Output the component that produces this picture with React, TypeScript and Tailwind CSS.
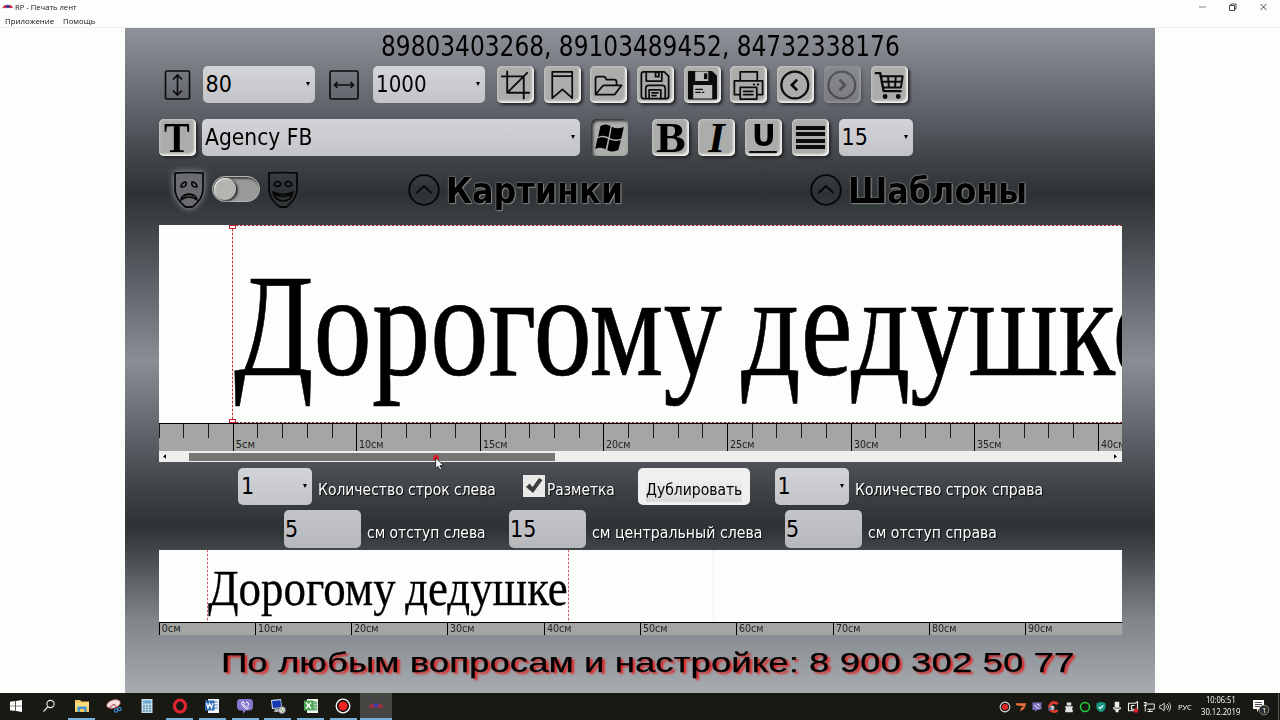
import { useLayoutEffect, useRef, useState } from "react";
import type { ReactNode } from "react";
import clsx from "clsx";

interface FitTextProps {
  width: number;
  className?: string;
  children: ReactNode;
}

// Stretches a single line of text horizontally to the given width
const FitText = ({ width, className, children }: FitTextProps) => {
  const ref = useRef<HTMLSpanElement>(null);
  const [scale, setScale] = useState(1);

  useLayoutEffect(() => {
    if (ref.current) setScale(width / ref.current.offsetWidth);
  }, [width]);

  return (
    <span className={clsx("block shrink-0", className)} style={{ width }}>
      <span
        ref={ref}
        className="inline-block origin-left whitespace-nowrap"
        style={{ transform: `scaleX(${scale})` }}
      >
        {children}
      </span>
    </span>
  );
};

interface BoxProps {
  className?: string;
  children?: ReactNode;
}

const ToolButton = ({ className, children }: BoxProps) => (
  <button
    className={clsx(
      "flex h-[37px] w-[37px] shrink-0 items-center justify-center rounded-[5px] bg-[#abadaa] shadow-[inset_-2px_-2px_2px_#eeeeeb,inset_1px_1px_2px_#c4c4c2,2px_2px_3px_#25262a]",
      className
    )}
  >
    {children}
  </button>
);

const Icon = ({ children, width = 1.8 }: { children: ReactNode; width?: number }) => (
  <svg
    viewBox="0 0 37 37"
    className="mr-[1px] h-[36px] w-[36px] shrink-0"
    fill="none"
    stroke="#0b0b0b"
    strokeWidth={width}
    strokeLinejoin="round"
    strokeLinecap="round"
  >
    {children}
  </svg>
);

interface SelectProps {
  value: string;
  textWidth: number;
  className?: string;
}

const Select = ({ value, textWidth, className }: SelectProps) => (
  <div
    className={clsx(
      "flex h-[37px] shrink-0 items-center justify-between rounded-[5px] bg-linear-to-b from-[#d3d4d8] to-[#c3c4c8] pr-[5px] pl-[3px]",
      className
    )}
  >
    <FitText width={textWidth} className="text-[23px] leading-[37px]">
      {value}
    </FitText>
    <svg viewBox="0 0 4 4" className="mb-[2px] h-[4px] w-[4px]">
      <path d="M0 0h4L2 4z" />
    </svg>
  </div>
);

const Field = ({ value, textWidth, className }: SelectProps) => (
  <div
    className={clsx(
      "flex h-[38px] shrink-0 items-center rounded-[5px] bg-linear-to-b from-[#c4c5c9] to-[#b7b8bc] pl-[1px]",
      className
    )}
  >
    <FitText width={textWidth} className="text-[23px] leading-[38px]">
      {value}
    </FitText>
  </div>
);

const Label = ({ width, className, children }: FitTextProps) => (
  <FitText
    width={width}
    className={clsx("text-[16px] leading-[20px] text-white [text-shadow:1px_1px_1px_#000]", className)}
  >
    {children}
  </FitText>
);

const Mask = ({ sad }: { sad?: boolean }) => (
  <svg
    viewBox="0 0 30 36"
    className={clsx(
      "h-[36px] w-[30px] shrink-0 overflow-visible",
      sad && "drop-shadow-[0_0_3px_#a8a9ac]"
    )}
    fill={sad ? "#6a6c70" : "none"}
    stroke="#050505"
    strokeWidth="1.7"
    strokeLinejoin="round"
  >
    <path d="M1 1.2Q15 -.2 29 1.2V16c0 10-6 15-10 18.6q-4 1-8 0C7 31 1 26 1 16z" />
    {sad ? (
      <>
        <path d="M7 14c1-3 3-4 5-4 1 3-1 5-3 5-1 0-2 0-2-1zM23 14c-1-3-3-4-5-4-1 3 1 5 3 5 1 0 2 0 2-1z" fill="none" />
        <path d="M7 28c1-8 15-8 16 0-4-4-12-4-16 0z" fill="none" />
        <path d="M10 24q5-3 10 0" fill="none" />
      </>
    ) : (
      <>
        <path d="M6 13c1-4 5-5 7-1-1 3-5 3-7 1zM24 13c-1-4-5-5-7-1 1 3 5 3 7 1z" />
        <path d="M5 20q10 5 20 0-2 9-10 9T5 20zM7 22.500q8 4 16 0" />
      </>
    )}
  </svg>
);

const SectionTitle = ({ width, className, children }: FitTextProps) => (
  <div className={clsx("flex h-[37px] items-center gap-[6px]", className)}>
    <svg viewBox="0 0 32 32" className="h-[32px] w-[32px]" fill="none" stroke="#060606" strokeWidth="1.8">
      <circle cx="16" cy="16" r="14.8" />
      <path d="M8.5 19 16 12l7.5 7" />
    </svg>
    <FitText
      width={width}
      className="pt-[2px] text-[35px] leading-[37px] font-bold [text-shadow:0_0_1px_#aaa,0_0_2px_#999,1px_1px_1px_#777]"
    >
      {children}
    </FitText>
  </div>
);

const cm = Array.from({ length: 39 }, (_, i) => i + 2);
const previewCm = [0, 10, 20, 30, 40, 50, 60, 70, 80, 90];

const MainRuler = () => (
  <div className="flex h-[28px] overflow-hidden border-t border-black bg-[#a4a6a3]">
    {cm.map((n) => (
      <div
        key={n}
        className={clsx("w-[24.72px] shrink-0", n % 5 === 0 ? "h-full border-l-[1.5px] border-black" : "h-[14px] border-l-[1.5px] border-[#1c1c1c]")}
      >
        {n % 5 === 0 && (
          <FitText width={n === 5 ? 19 : 25} className="pt-[14px] pl-[2px] text-[11px] leading-[14px] text-[#222]">
            {n}см
          </FitText>
        )}
      </div>
    ))}
  </div>
);

const Toolbar = () => (
  <>
    <div className="mt-[1px] flex h-[37px] items-center">
      <svg viewBox="0 0 26 30" className="ml-[5px] h-[30px] w-[27px]" fill="none" stroke="#0b0b0b" strokeWidth="1.6">
        <rect x="1" y="1" width="24" height="28" rx="1.5" />
        <path d="M13 5v20M8.5 9.500 13 5l4.500 4.500M8.500 20.500 13 25l4.500-4.500" />
      </svg>
      <Select value="80" textWidth={26} className="ml-[12px] w-[112px]" />
      <svg viewBox="0 0 30 30" className="ml-[14px] h-[30px] w-[30px]" fill="none" stroke="#0b0b0b" strokeWidth="1.6">
        <rect x="1" y="1" width="28" height="28" rx="1.5" />
        <path d="M5.500 15h19M8.500 12l-3 3 3 3M21.500 12l3 3-3 3" />
      </svg>
      <Select value="1000" textWidth={51} className="ml-[14.500px] w-[112px]" />
      <div className="ml-[12px] flex gap-[9.7px]">
        <ToolButton>
          <Icon width={1.9}>
            <path d="M5 9.700h22.500V32.500M10.500 4.500v22H33M10.500 26.500 31 6" />
          </Icon>
        </ToolButton>
        <ToolButton>
          <Icon>
            <path d="M8.500 5h20.500v27l-10-9-10.500 9zM8.500 9.500H29" />
          </Icon>
        </ToolButton>
        <ToolButton>
          <Icon>
            <path d="M5.700 28V12q0-2 2-2H14q2 0 2.700 3H25q2.300 0 2.300 2.500V19M5.700 28.300 13 19.500q.6-.7 1.500-.7h18L26 27.600q-.6.7-1.500.7z" />
          </Icon>
        </ToolButton>
        <ToolButton>
          <Icon>
            <path d="M7 5h21l4.500 4.500V30q0 2.500-2.500 2.500H7Q4.500 32.500 4.500 30V7.500Q4.500 5 7 5z" />
            <path d="M9.500 5v9.500h16V5M19 5.500h3.500v4.500H19zM9 32.500V22q0-3 3-3h14q3 0 3 3v10.500M12.500 32.500V23.500h12v9M15.500 26.500h6M15.500 29.300h4" />
          </Icon>
        </ToolButton>
        <ToolButton>
          <Icon>
            <path d="M5 5h23.500l4.500 4.500V32.500H5z" fill="#0b0b0b" />
            <path d="M11.500 4.500h13.500v10H11.500zM9.500 18.500H29V32.500H9.500z" fill="#bcbdbb" stroke="none" />
            <path d="M20.500 6.500h3.500v6h-3.500z" fill="#0b0b0b" stroke="none" />
            <path d="M12 23h7M12 26h5M19 26h1.500" strokeWidth="1.2" />
          </Icon>
        </ToolButton>
        <ToolButton>
          <Icon>
            <path d="M10.500 14V5h17.500v9M10.500 28.500H4.500V14.200h29v14.300h-6M10.500 21h17v12h-17zM14 25h9.500M14 28.500h9.500" />
            <path d="M24.500 18h.3M28.500 18h.5" strokeWidth="2" />
          </Icon>
        </ToolButton>
        <ToolButton>
          <Icon width={2.3}>
            <circle cx="18.300" cy="18.500" r="13.800" />
            <path d="m20.700 13-5.400 5.500 5.400 5.500" strokeWidth="2.800" strokeLinecap="butt" strokeLinejoin="miter" />
          </Icon>
        </ToolButton>
        <ToolButton className="opacity-30">
          <Icon width={2.3}>
            <circle cx="18.300" cy="18.500" r="13.800" />
            <path d="m16 13 5.400 5.500L16 24" strokeWidth="2.800" strokeLinecap="butt" strokeLinejoin="miter" />
          </Icon>
        </ToolButton>
        <ToolButton>
          <Icon width={2}>
            <path d="M5 6.300h4.500l3.500 18.500h17.500" strokeWidth="2.500" />
            <path d="M10 9.500h22.500l-1.700 11.500H12.500M11 15.200h20.500M17.500 9.500l.8 11M25.500 9.500l-.8 11" />
            <circle cx="14.500" cy="30.300" r="1.500" fill="#0b0b0b" />
            <circle cx="28" cy="30.300" r="1.500" fill="#0b0b0b" />
          </Icon>
        </ToolButton>
      </div>
    </div>

    <div className="mt-[16px] flex h-[37px] items-center">
      <ToolButton>
        <FitText width={26} className="font-['Liberation_Serif',serif] text-[43px] leading-[37px] font-bold">
          T
        </FitText>
      </ToolButton>
      <Select value="Agency FB" textWidth={107} className="ml-[6.500px] w-[378px]" />
      <ToolButton className="ml-[10.500px] bg-[#979997] shadow-[inset_2px_2px_3px_#2a2b2d,inset_-1px_-1px_1px_#a5a6a5]">
        <svg viewBox="0 0 37 37" className="h-[37px] w-[37px]">
          <path d="M9.500 7q5-3 10 0l-2 11.300q-5-3-10.500-.3zM20.800 7.700q5 3 12 .2l-2.500 11.500q-6 2.500-11.500-.5zM6.500 19.500q5-2.700 10.500.2l-2.300 10.500q-5-3-10.500-.2zM18.400 20.400q5.300 2.700 11.500.5L27.300 31q-5.500 2.800-11 .2z" />
        </svg>
      </ToolButton>
      <div className="ml-[24px] flex gap-[9.700px]">
        <ToolButton>
          <FitText width={30} className="font-['Liberation_Serif',serif] text-[43px] leading-[37px] font-bold">
            B
          </FitText>
        </ToolButton>
        <ToolButton>
          <span className="font-['Liberation_Serif',serif] text-[43px] leading-[37px] font-bold italic">I</span>
        </ToolButton>
        <ToolButton className="flex-col">
          <FitText width={24} className="mr-[1px] h-[29px] text-[31px] leading-[27px] font-bold">
            U
          </FitText>
          <span className="h-[2px] w-[28px] rounded-full bg-[#0b0b0b]" />
        </ToolButton>
        <ToolButton className="flex-col gap-[2.500px]">
          <span className="h-[3.800px] w-[29px] bg-[#0b0b0b]" />
          <span className="h-[3.800px] w-[29px] bg-[#0b0b0b]" />
          <span className="h-[3.800px] w-[29px] bg-[#0b0b0b]" />
          <span className="h-[3.800px] w-[29px] bg-[#0b0b0b]" />
        </ToolButton>
      </div>
      <Select value="15" textWidth={26} className="ml-[10px] w-[74px]" />
    </div>

    <div className="mt-[15px] flex h-[37px] items-center">
      <div className="ml-[15.500px] flex items-center gap-[8px]">
        <Mask sad />
        <div className="mb-[1px] flex h-[26px] w-[48px] items-center rounded-full border border-[#b4b5b2] bg-[#999b98] pl-[1px] shadow-[inset_1px_2px_2px_#444]">
          <div className="h-[22px] w-[22px] rounded-full bg-[#b3b5b1] shadow-[inset_1px_1px_1px_#e6e6e3,2px_1px_2px_#333]" />
        </div>
        <Mask />
      </div>
      <SectionTitle width={177} className="mt-[1px] ml-[109.500px]">
        Картинки
      </SectionTitle>
      <SectionTitle width={179} className="mt-[1px] ml-[187.500px]">
        Шаблоны
      </SectionTitle>
    </div>
  </>
);

const Editor = () => (
  <div className="mt-[17px] w-[963px]">
    <div className="relative h-[198px] overflow-hidden bg-[#fcfefc] pl-[75px]">
      <FitText
        width={930}
        className="font-['Liberation_Serif',serif] text-[146px] leading-[202px] [word-spacing:-12px] [-webkit-text-stroke:0.7px_#000]"
      >
        Дорогому дедушке
      </FitText>
      {/* dotted selection frame with its corner handles */}
      <span className="absolute top-0 left-[73px] h-full w-[1px] bg-[repeating-linear-gradient(to_bottom,#c8232c_0_2px,#f3c9cb_2px_4px)]" />
      <span className="absolute top-0 right-0 left-[73px] h-[1px] bg-[repeating-linear-gradient(to_right,#b8232c_0_2px,#e9c9cb_2px_4px)]" />
      <span className="absolute right-0 bottom-0 left-[73px] h-[1px] bg-[repeating-linear-gradient(to_right,#8a1c22_0_2px,#e9c9cb_2px_4px)]" />
      <span className="absolute top-0 left-[70px] h-[4px] w-[7px] border border-[#c8232c] bg-white" />
      <span className="absolute bottom-0 left-[70px] h-[4px] w-[7px] border border-[#c8232c] bg-white" />
    </div>
    <MainRuler />
    <div className="relative flex h-[11px] items-center bg-[#eeefed]">
      <svg viewBox="0 0 4 6" className="ml-[4px] h-[5px] w-[3px]">
        <path d="M4 0v6L0 3z" />
      </svg>
      <div className="ml-[23.500px] h-[8px] w-[366px] bg-[#747673]" />
      <svg viewBox="0 0 4 6" className="mr-[5px] ml-auto h-[5px] w-[3px]">
        <path d="M0 0v6l4-3z" />
      </svg>
      {/* mouse pointer over the scroll thumb */}
      <span className="absolute top-[4px] left-[274px] h-[6px] w-[6px] rounded-full bg-[#d81e26]" />
      <svg viewBox="0 0 12 18" className="absolute top-[6px] left-[276px] z-10 h-[14px] w-[9px]">
        <path d="M1 1v14l3-3 2.500 5 2.500-1-2.500-5H11z" fill="#fff" stroke="#111" />
      </svg>
    </div>
  </div>
);

const Settings = () => (
  <>
    <div className="mt-[6px] flex h-[37px] items-center">
      <Select value="1" textWidth={13} className="ml-[79.500px] w-[74px]" />
      <Label width={178} className="mt-[6px] ml-[6px]">Количество строк слева</Label>
      <div className="mb-[1px] ml-[27px] flex h-[22px] w-[22px] items-center justify-center bg-[#e9eae8]">
        <svg viewBox="0 0 20 20" className="h-[20px] w-[20px]">
          <path d="m2 11 3.500-3.500 3 3.500L15 2l3.500 2L9 17z" fill="#3c3e3d" />
        </svg>
      </div>
      <Label width={68} className="mt-[6px] ml-[2px]">Разметка</Label>
      <button className="ml-[23px] flex h-[37px] w-[112px] items-center justify-center rounded-[5px] bg-[#eff0ef] pt-[6px]">
        <FitText width={96} className="bg-linear-to-b from-[#eff0ef] to-[#d9dad9] text-left text-[16px] leading-[24px]">
          Дублировать
        </FitText>
      </button>
      <Select value="1" textWidth={13} className="ml-[24.500px] w-[74px]" />
      <Label width={188} className="mt-[6px] ml-[6px]">Количество строк справа</Label>
    </div>
    <div className="mt-[5px] flex h-[38px] items-center">
      <Field value="5" textWidth={13} className="ml-[125.500px] w-[77px]" />
      <Label width={119} className="mt-[7px] ml-[6px]">см отступ слева</Label>
      <Field value="15" textWidth={26} className="ml-[23px] w-[77px]" />
      <Label width={170} className="mt-[7px] ml-[6px]">см центральный слева</Label>
      <Field value="5" textWidth={13} className="ml-[23px] w-[77px]" />
      <Label width={129} className="mt-[7px] ml-[6px]">см отступ справа</Label>
    </div>
  </>
);

const Preview = () => (
  <div className="mt-[2px] w-[963px]">
    <div className="flex h-[72px] bg-[#fcfefc] pl-[48px]">
      <span className="w-[1px] bg-[repeating-linear-gradient(to_bottom,#cf5f68_0_2px,#f6dcde_2px_4px)]" />
      <FitText
        width={360}
        className="font-['Liberation_Serif',serif] text-[51px] leading-[76px] [word-spacing:-2px] [-webkit-text-stroke:0.3px_#000]"
      >
        Дорогому дедушке
      </FitText>
      <span className="w-[1px] bg-[repeating-linear-gradient(to_bottom,#cf5f68_0_2px,#f6dcde_2px_4px)]" />
      <span className="ml-[144px] border-l border-dotted border-[#e6e7e6]" />
    </div>
    <div className="flex h-[13px] overflow-hidden border-t border-black bg-[#a4a6a3]">
      {previewCm.map((n) => (
        <div key={n} className="w-[96.300px] shrink-0 border-l-[1.500px] border-black pl-[2px]">
          <FitText width={n === 0 ? 19 : 25} className="text-[11px] leading-[11px] text-[#222]">
            {n}см
          </FitText>
        </div>
      ))}
    </div>
  </div>
);

const DotIcon = ({ children, box = 16, className }: { children: ReactNode; box?: number; className?: string }) => (
  <svg viewBox={box === 16 ? "0 0 16 16" : "0 0 12 12"} className={clsx(box === 16 ? "h-[16px] w-[16px]" : "h-[12px] w-[12px]", className)}>
    {children}
  </svg>
);

const AppLogo = () => (
  <>
    <path d="M0 10.500q3-6 7-4.500l1 1 1-1q4-1.500 7 4.500-3-2-5-.5-1.500-1-3 0-1.500-1-3 0-2-1.500-5 .5z" fill="#c22736" />
    <path d="M5 6.500q3-2.500 6 0l-1 3H6z" fill="#3a3fa5" />
  </>
);

const taskbar = [
  {
    open: false,
    icon: <path d="M2 3.800 7.300 3v4.700H2zM8 2.900 14 2v5.700H8zM2 8.300h5.300V13L2 12.200zM8 8.300h6V14l-6-.9z" fill="#fff" />,
  },
  {
    open: false,
    icon: (
      <g fill="none" stroke="#eee" strokeWidth="1.100">
        <circle cx="9.500" cy="6" r="3.600" />
        <path d="M7 8.700 2.500 13.500" />
      </g>
    ),
  },
  {
    open: true,
    icon: (
      <>
        <path d="M1 2h5l1.500 1.500H15V14H1z" fill="#f5cd60" />
        <path d="M1 5h14v5H1z" fill="#fadc83" />
        <path d="M3.500 8.500h9V14h-2.300v-3H5.800v3H3.500z" fill="#4296cf" />
      </>
    ),
  },
  {
    open: false,
    icon: (
      <>
        <ellipse cx="7.500" cy="6" rx="7" ry="4" fill="#f3e3e3" stroke="#c55" strokeWidth=".6" transform="rotate(-18 7.500 6)" />
        <path d="m8 6-5 4M8 6l4 5" stroke="#a33" />
        <circle cx="10" cy="12.500" r="1.700" fill="none" stroke="#3787c4" strokeWidth="1.200" />
        <circle cx="13.500" cy="11" r="1.700" fill="none" stroke="#3787c4" strokeWidth="1.200" />
      </>
    ),
  },
  {
    open: false,
    icon: (
      <>
        <path d="M2.500 1h11v14h-11z" fill="#c3dded" />
        <path d="M4 2.500h8v3H4z" fill="#6aa7d0" />
        <path d="M4 8h8M4 10.500h8M4 13h8" stroke="#5d8faf" strokeWidth="1.500" strokeDasharray="2 1" />
      </>
    ),
  },
  { open: true, icon: <ellipse cx="8" cy="8" rx="5.500" ry="6" fill="none" stroke="#e32532" strokeWidth="3.200" /> },
  {
    open: true,
    icon: (
      <>
        <path d="M4 1h11v14H4z" fill="#f3f7fb" />
        <path d="M10 4h4M10 7h4M10 10h4" stroke="#5a87bd" />
        <path d="M1 2.500h9.500v10H1z" fill="#2868b4" />
        <path d="m2.500 5 1.500 5 1.700-4.500L7.500 10 9 5" fill="none" stroke="#fff" strokeWidth="1.300" />
      </>
    ),
  },
  {
    open: true,
    icon: (
      <>
        <path d="M3 1h10q3 0 3 4v3q0 4-3 4.500H9L6 15.500V12.500H3Q0 12 0 8V5q0-4 3-4z" fill="#8877cc" />
        <path d="M5 4q-1 1 .5 3.500T10 11q1 0 1.500-1.500l-2-1.500-1 .8Q7 8 6.500 6.500L7.500 6 6 3.500zM9 4q3 0 3 3.500" fill="none" stroke="#fff" />
      </>
    ),
  },
  {
    open: true,
    icon: (
      <>
        <path d="M1 2l10-1 1 9-10 1z" fill="#d9e5ef" />
        <path d="M2 3l8.500-.8.700 7L3 10z" fill="#1437b8" />
        <path d="M5 11h5v3H4z" fill="#a9b3bb" />
        <circle cx="12" cy="12" r="3.500" fill="#dfe4df" stroke="#667" />
        <path d="m10.500 12 1.500-1m0 3 1.500-1.500" stroke="#3a7c3a" />
      </>
    ),
  },
  {
    open: true,
    icon: (
      <>
        <path d="M4 1h11v14H4z" fill="#f1f8f2" />
        <path d="M11 3v10M13 3v10M10 5h4.500M10 8h4.500M10 11h4.500" stroke="#53a267" />
        <path d="M1 2.500h9.500v10H1z" fill="#4ea552" />
        <path d="m3 4.500 5 6m0-6-5 6" stroke="#fff" strokeWidth="1.400" />
      </>
    ),
  },
  {
    open: true,
    icon: (
      <>
        <circle cx="8" cy="8" r="6.800" fill="#111" stroke="#fff" strokeWidth="1.300" />
        <circle cx="8" cy="8" r="4.500" fill="#f02424" />
      </>
    ),
  },
  { open: true, icon: <AppLogo /> },
];

const tray = [
  <><circle cx="8" cy="8" r="6.500" fill="#222" stroke="#ddd" strokeWidth="1.400" /><circle cx="8" cy="8" r="4" fill="#e22525" /></>,
  <path d="M1 3h14l-2.500 7L7 14l1-5 4-2-10-1z" fill="#f0703c" />,
  <><path d="M2 2h12v9l-6 1-2 3v-3H2z" fill="#7d70bd" /><path d="M5 5q1 4 5 5l1-1M8 4q3 0 3 3" fill="none" stroke="#fff" /></>,
  <><path d="M14 4A6 6 0 1 0 14 12" fill="none" stroke="#d63b2d" strokeWidth="4" /><circle cx="7" cy="9" r="3" fill="#c8ccd4" /><path d="m2 12 4-3" stroke="#3d73bb" strokeWidth="2.500" /></>,
  <path d="M5 2h6v4H5zM3 7h10v2l-1 1 1 2v3H3v-3l1-2-1-1z" fill="#e3e3e3" />,
  <circle cx="8" cy="8" r="6" fill="none" stroke="#20d336" strokeWidth="2" />,
  <><path d="M8 1 14 3v6q-1 4-6 6-5-2-6-6V3z" fill="#159a86" /><path d="m5 8 2 2 4-4" fill="none" stroke="#fff" strokeWidth="1.500" /></>,
  <path d="M5 1h6v8H5zM3 8h1.500v2h7V8H13v3l-3 1v3H6v-3l-3-1z" fill="#eee" />,
  <><path d="M2 3h9l3-2v12H2z" fill="none" stroke="#eee" strokeWidth="1.500" /><path d="M10 6H6v5h4" fill="none" stroke="#eee" strokeWidth="1.500" /><circle cx="12" cy="12.500" r="3" fill="#e11f2c" /></>,
  <path d="M4 4h11v7H6M9 11v3M6 14h7M1 2h4M1 6h4M3 2v12" fill="none" stroke="#eee" strokeWidth="1.300" />,
  <path d="M1 6h2l4-3v10l-4-3H1zM9 6q2 2 0 4M11 4q4 4 0 8M13 2q5 6 0 12" fill="none" stroke="#ddd" strokeWidth="1.200" />,
];

const Taskbar = () => (
  <footer className="flex h-[27px] items-stretch bg-[#191914] font-['Open_Sans','Noto_Sans',sans-serif] text-white">
    {taskbar.map((item, i) => (
      <div
        key={i}
        className={clsx("flex w-[32.700px] flex-col items-center pt-[5px]", i === taskbar.length - 1 && "bg-[#454541]")}
      >
        <DotIcon>{item.icon}</DotIcon>
        {item.open && (
          <span className={clsx("mt-auto h-[2px] bg-[#76b0dc]", i === taskbar.length - 1 ? "w-full" : "w-[27px]")} />
        )}
      </div>
    ))}
    <div className="ml-auto flex items-center">
      {tray.map((icon, i) => (
        <div key={i} className="flex w-[16px] justify-center">
          <DotIcon box={12} className="h-[12px] w-[12px]">
            <g transform="scale(.75)">{icon}</g>
          </DotIcon>
        </div>
      ))}
      <FitText width={14} className="ml-[5px] text-[8px] leading-[12px]">РУС</FitText>
      <div className="mb-[2px] ml-[9px] flex w-[39px] flex-col items-center">
        <FitText width={30} className="text-[8.500px] leading-[12px]">10:06:51</FitText>
        <FitText width={39} className="text-[8.500px] leading-[12px]">30.12.2019</FitText>
      </div>
      <div className="relative ml-[13px] h-[18px] w-[17px]">
        <svg viewBox="0 0 17 18" className="h-[18px] w-[17px]">
          <path d="M0 2h11v9H6l-2 3v-3H0z" fill="#fff" />
          <path d="M2 4.500h7M2 6.500h7M2 8.500h5" stroke="#222" strokeWidth=".8" />
          <circle cx="11" cy="12" r="4.800" fill="#2b2b28" stroke="#999" strokeWidth=".8" />
        </svg>
        <span className="absolute top-[7px] left-[9px] text-[8px] leading-[10px]">1</span>
      </div>
      <span className="mr-[1px] ml-[8px] h-[27px] w-[1px] bg-[#555]" />
    </div>
  </footer>
);

const WindowHeader = () => (
  <header className="flex h-[28px] justify-between border-b border-[#efefef] font-['Open_Sans','Noto_Sans',sans-serif] text-[8px] text-[#111]">
    <div>
      <div className="flex h-[14px] items-center">
        <DotIcon box={12} className="mx-[1.500px]">
          <g transform="scale(.72)"><AppLogo /></g>
        </DotIcon>
        <FitText width={62} className="leading-[14px]">RP - Печать лент</FitText>
      </div>
      <div className="flex h-[14px] items-center pl-[4.500px]">
        <FitText width={49} className="leading-[14px]">Приложение</FitText>
        <FitText width={32} className="ml-[9px] leading-[14px]">Помощь</FitText>
      </div>
    </div>
    <svg viewBox="0 0 70 10" className="mt-[2px] mr-[11px] h-[10px] w-[70px]" fill="none" stroke="#333" strokeWidth=".9">
      <path d="M0 5h7" stroke="#777" />
      <path d="M30.500 3.500h5v5h-5zM32 3.500V2h5v5h-1.500M61.500 2l6 6m0-6-6 6" />
    </svg>
  </header>
);

export default function App() {
  return (
    <div className="flex h-[720px] w-[1280px] flex-col overflow-hidden bg-[#fcfefc] text-black">
      <WindowHeader />
      <main className="mx-auto h-[665px] w-[1030px] overflow-hidden bg-[linear-gradient(to_bottom,#8f9298_0%,#5d5f67_13%,#3e4346_20%,#2d3235_25%,#3b4043_29%,#5d6067_38%,#8a8d94_50%,#5c5f66_62%,#3c4144_70%,#2d3235_75%,#44494c_79%,#80858a_89%,#a7acb1_100%)] pl-[33.500px] font-['DejaVu_Sans_Condensed','DejaVu_Sans',sans-serif]">
        <div className="flex h-[37px] pl-[222px]">
          <FitText width={519} className="text-[27.500px] leading-[37px]">
            89803403268, 89103489452, 84732338176
          </FitText>
        </div>
        <Toolbar />
        <Editor />
        <Settings />
        <Preview />
        <FitText
          width={853}
          className="mt-[9px] ml-[62px] font-['Liberation_Sans',sans-serif] text-[28px] leading-[38px] [-webkit-text-stroke:0.25px_#000] [text-shadow:2px_2px_2px_#e32020]"
        >
          По любым вопросам и настройке: 8 900 302 50 77
        </FitText>
      </main>
      <Taskbar />
    </div>
  );
}
